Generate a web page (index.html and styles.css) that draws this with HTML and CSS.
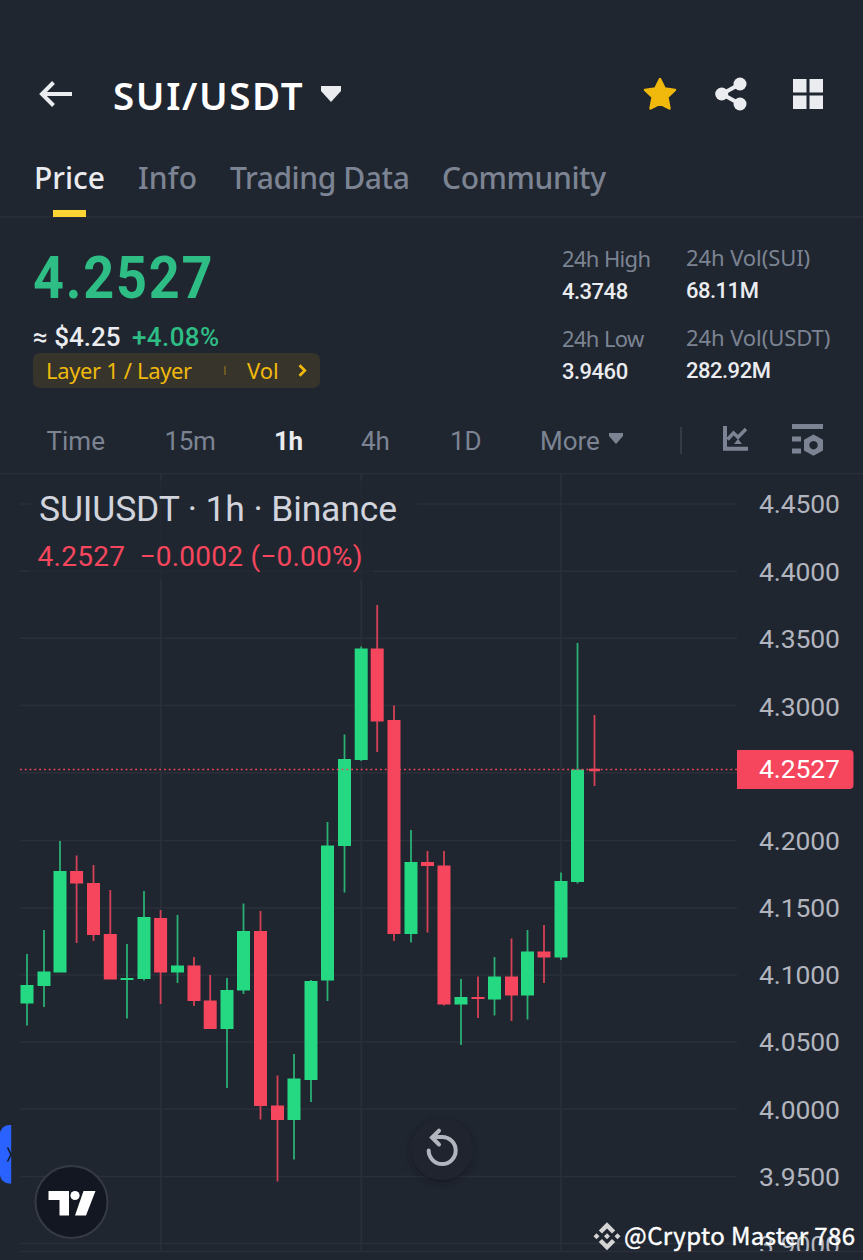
FILE: index.html
```html
<!DOCTYPE html>
<html lang="en">
<head>
<meta charset="utf-8">
<title>SUI/USDT</title>
<link rel="stylesheet" href="styles.css">
</head>
<body>
<header class="topbar">
  <svg class="back" width="34" height="28" viewBox="0 0 34 28"><path d="M14.500 2.500 3 14l11.500 11.500M3 14h30" fill="none" stroke="#eaecef" stroke-width="4"/></svg>
  <h1 class="pair">SUI/USDT</h1>
  <svg class="caret" width="22" height="17" viewBox="0 0 22 17"><path d="M1 0h20v5L11 16 1 5z" fill="#eaecef"/></svg>
  <svg class="star" width="34" height="34" viewBox="0 0 34 34"><path d="M17 2l4.700 9.600 10.300 1.300-7.600 7.300 2.100 11.300L17 26.600 7.500 31.500l2.100-11.300L2 12.900l10.300-1.300z" fill="#f0b90b" stroke="#f0b90b" stroke-width="2.500" stroke-linejoin="round"/></svg>
  <svg class="share" width="32" height="34" viewBox="0 0 32 34"><g fill="#eaecef"><circle cx="6.700" cy="17" r="6.500"/><circle cx="25" cy="7" r="6.500"/><circle cx="25" cy="27" r="6.500"/></g><path d="M25 7 7 17l18 10" fill="none" stroke="#eaecef" stroke-width="4"/></svg>
  <svg class="apps" width="30" height="30" viewBox="0 0 30 30"><path d="M0 0h13.500v13.500H0zM16.500 0H30v13.500H16.500zM0 16.500h13.500V30H0zM16.500 16.500H30V30H16.500z" fill="#eaecef"/></svg>
</header>
<nav class="tabs">
  <a class="tab tab-price active">Price</a>
  <a class="tab tab-info">Info</a>
  <a class="tab tab-trading">Trading Data</a>
  <a class="tab tab-community">Community</a>
</nav>
<section class="summary">
  <div class="quote">
    <div class="last">4.2527</div>
    <div class="approx"><span class="usd">≈ $4.25</span><span class="change">+4.08%</span></div>
    <div class="tags"><span class="tag-layer">Layer 1 / Layer</span><i class="tag-sep"></i><span class="tag-vol">Vol</span>
      <svg width="9" height="13" viewBox="0 0 9 13"><path d="M1.500 1.300 6.800 6.500 1.500 11.700" fill="none" stroke="#f0b90b" stroke-width="2.700"/></svg></div>
  </div>
  <dl class="stats stats-price">
    <dt class="s-high">24h High</dt><dd>4.3748</dd>
    <dt class="s-low">24h Low</dt><dd>3.9460</dd>
  </dl>
  <dl class="stats stats-vol">
    <dt class="s-sui">24h Vol(SUI)</dt><dd>68.11M</dd>
    <dt class="s-usdt">24h Vol(USDT)</dt><dd>282.92M</dd>
  </dl>
</section>
<nav class="periods">
  <a class="p-time">Time</a><a class="p-15">15m</a><a class="p-1h active">1h</a><a class="p-4h">4h</a><a class="p-1d">1D</a><a class="p-more">More</a>
  <svg class="more-caret" width="14" height="12" viewBox="0 0 14 12"><path d="M0 0h14v3L7 11 0 3z" fill="#7c8493"/></svg>
  <i class="divider"></i>
  <svg class="ind" width="25" height="26" viewBox="0 0 25 26"><path d="M2 0v22.700H25" fill="none" stroke="#7c8493" stroke-width="4"/><path d="M4.500 13.500 10.500 7 15 11.300 23 3" fill="none" stroke="#7c8493" stroke-width="3.400"/><path d="M11 18l4-5 4 5z" fill="#7c8493"/></svg>
  <svg class="settings" width="32" height="32" viewBox="0 0 32 32"><path d="M0 0h31v5H0zM0 12.500h9v5H0zM0 24.500h9v5H0z" fill="#7c8493"/><path fill-rule="evenodd" d="M21.500 10.500 31 15.800v10.700l-9.500 5.300-9.500-5.300v-10.700zM21.500 17a4.200 4.200 0 1 0 .01 0z" fill="#7c8493"/></svg>
</nav>
<main class="chart">
<svg class="plot" width="863" height="787" viewBox="0 473 863 787">
  <path class="grid" d="M0 473.500H863M20 504H737M20 571.200H737M20 638.300H737M20 705.500H737M20 773H737M20 840.500H737M20 908H737M20 975H737M20 1042H737M20 1109H737M20 1176.500H737M20 1243.500H737M20 1251.500H863M160.800 474V1251M361.200 474V1251M561 474V1251"/>
  <path class="mask" d="M29 481H418V536H29zM29 536H374V579H29z"/>
  <g class="up">
    <path class="wick" d="M27 954V1025.500M44 930V1007M60 841V972M127 944V1018.500M144 891V980.500M177.500 915V983M227 978V1088M243.500 903.500V994M294 1054V1159.500M311 980V1102M327.500 822V1001M344.500 734.500V892.500M361.200 646.500V761M411 830V942.500M461 979V1045M494.500 957V1015.500M527.500 930V1019.500M561 872.500V960M577.500 643V883.500"/>
    <path class="body" d="M27 985V1003.500M44 971.500V986M60 871V972.500M127 978V980M144 917V979M177.500 965.500V972.500M227 990V1029M243.500 931V990.500M294 1078.500V1120M311 981V1080M327.500 845.500V980.500M344.500 759V846M361.200 648.500V760M411 862V934M461 997V1004.500M494.500 976.500V999.500M527.500 951.500V995.500M561 881V957.500M577.500 769.500V882"/>
  </g>
  <g class="down">
    <path class="wick" d="M76.600 855.500V943M93.500 865V941M110.300 890V979M160.600 910V1004M194 957V1006M210.200 975V1029M260.500 911V1119.500M277.500 1075.500V1181.500M377.200 605V752M394 705.500V941M427.500 851V932.500M444 851V1005.500M478 976.500V1018M511.500 938.500V1021M544 925V983M594.500 715V786"/>
    <path class="body" d="M76.600 871V883.500M93.500 883V935M110.300 934V979.500M160.600 918V972.500M194 965.500V1001M210.200 1000.500V1029M260.500 931V1106M277.500 1105.500V1120M377.200 648.500V721.500M394 720V934M427.500 862V866M444 865.500V1004.500M478 997V999M511.500 976.500V995.500M544 951.500V957.500"/>
    <path d="M589 770H600" stroke-width="2.500"/>
  </g>
  <path class="price-line" d="M20 769.500H737"/>
  <g class="legend">
    <text x="39" y="521" class="symbol" textLength="358">SUIUSDT · 1h · Binance</text>
    <text x="37.500" y="566" class="delta" textLength="87.500">4.2527</text>
    <text x="139.500" y="566" class="delta" textLength="223">−0.0002 (−0.00%)</text>
  </g>
  <g class="axis">
    <text x="759" y="513" textLength="81">4.4500</text>
    <text x="759" y="581" textLength="81">4.4000</text>
    <text x="759" y="648" textLength="81">4.3500</text>
    <text x="759" y="715.600" textLength="81">4.3000</text>
    <text x="759" y="850" textLength="81">4.2000</text>
    <text x="759" y="917" textLength="81">4.1500</text>
    <text x="759" y="984" textLength="81">4.1000</text>
    <text x="759" y="1051" textLength="81">4.0500</text>
    <text x="759" y="1118.800" textLength="81">4.0000</text>
    <text x="759" y="1186" textLength="81">3.9500</text>
    <svg x="737" y="1230" width="126" height="21" viewBox="737 1230 126 21"><text x="759" y="1253.500" textLength="81">3.9000</text></svg>
    <path d="M737 750H849.500a4 4 0 0 1 4 4V785a4 4 0 0 1-4 4H737z" fill="#f6465d"/>
    <text x="759" y="778.400" textLength="81" class="current">4.2527</text>
  </g>
  <defs><filter id="soft" x="-30%" y="-30%" width="160%" height="160%"><feGaussianBlur stdDeviation="3"/></filter></defs>
  <circle cx="442" cy="1152" r="31" fill="#12161d" opacity=".65" filter="url(#soft)"/>
  <circle cx="442" cy="1149" r="31" fill="#1f242e"/>
  <path d="M428.700 1150.500a13.500 13.500 0 1 0 13.500-13.500h-9.500M439 1130.700 432 1137.500 439 1144.500" fill="none" stroke="#b2b5be" stroke-width="4" stroke-linecap="round"/>
  <path d="M11.200 1125H9a9 9 0 0 0-9 9V1174.500a9 9 0 0 0 9 9H11.200z" fill="#2962ff"/>
  <path d="M7.500 1147.500 11 1154.500 7.500 1161.500" fill="none" stroke="#161a25" stroke-width="1.600"/>
  <circle cx="71.500" cy="1202" r="36" fill="#131722" stroke="#363a45" stroke-width="2"/>
  <path d="M48.500 1191H69V1215.500H59.500V1200H48.500zM83.500 1191H95.500L86 1215.500H75z" fill="#fff"/><circle cx="75" cy="1195.500" r="4.600" fill="#fff"/>
  <g class="watermark">
    <path d="M607 1222.300 615.200 1230.500 612 1233.600 607 1228.600 602 1233.600 598.800 1230.500zM607 1250.200 615.200 1242 612 1238.900 607 1243.900 602 1238.900 598.800 1242zM596.500 1233.200 599.500 1236.200 596.500 1239.200 593.500 1236.200zM617.500 1233.200 620.500 1236.200 617.500 1239.200 614.500 1236.200zM607 1233.200 610 1236.200 607 1239.200 604 1236.200z" fill="#d4d4d4"/>
    <text x="624" y="1245" textLength="231">@Crypto Master 786</text>
  </g>
</svg>
</main>
</body>
</html>
```
FILE: styles.css
```css
* { box-sizing: border-box; }
body { margin: 0; width: 863px; height: 1260px; overflow: hidden; background: #202630; color: #eaecef; font-family: "Noto Sans", sans-serif; }
svg { display: block; flex: none; }
a, span, dt, dd, h1, .last { white-space: nowrap; }
.topbar { height: 146px; padding: 46px 39px 0; display: flex; align-items: center; }
.back { margin-right: 40px; margin-top: -5px; }
.pair { margin: 0; width: 192px; padding-bottom: 3px; font-size: 38.500px; line-height: 50px; font-weight: 600; color: #fff; letter-spacing: 1.600px; }
.caret { margin-left: 15px; margin-top: -4px; }
.star { margin-left: 301px; margin-top: -5px; }
.share { margin-left: 38px; margin-top: -5px; }
.apps { margin-left: 46px; margin-top: -5px; }
.tabs { height: 72px; display: flex; padding-left: 34px; border-bottom: 2px solid #272c36; }
.tab { font-size: 30px; line-height: 40px; height: 72px; padding-top: 12px; color: #7c8493; position: relative; font-weight: 500; letter-spacing: -0.400px; }
.tab-price { width: 104px; }
.tab-info { width: 92px; letter-spacing: 0.200px; }
.tab-trading { width: 212px; }
.tab.active { color: #eaecef; font-weight: 500; letter-spacing: 0; }
.tab.active::after { content: ""; position: absolute; left: 19px; bottom: 1px; width: 33px; height: 7px; background: #fcd535; }
.summary { height: 178px; display: flex; padding-left: 33px; }
.quote { width: 529px; padding-top: 27px; }
.last { font: 700 60px/66px Roboto, sans-serif; color: #2ebd85; letter-spacing: 2px; height: 75px; width: 210px; transform: scaleX(.9); transform-origin: 0 0; }
.approx { height: 33px; display: flex; font: 500 26px/34px Roboto, sans-serif; }
.usd { width: 99px; }
.change { color: #2ebd85; letter-spacing: 0.400px; }
.tags { width: 287px; height: 35px; padding-left: 13px; border-radius: 7px; background: #37342c; display: flex; align-items: center; color: #f0b90b; font-size: 22px; line-height: 35px; }
.tag-layer { width: 178px; letter-spacing: -0.350px; }
.tag-sep { width: 2px; height: 9px; background: #6b5921; }
.tag-vol { width: 51px; margin-left: 21px; }
.stats { margin: 0; width: 124px; padding-top: 23px; }
.stats-vol { padding-top: 22px; }
.stats dt { font-size: 22px; line-height: 34px; color: #7c8493; }
.stats .s-high, .stats .s-low { letter-spacing: -0.650px; }
.stats .s-sui, .stats .s-usdt { letter-spacing: -0.080px; }
.stats dd { margin: 0; font: 500 22px/34px Roboto, sans-serif; margin-bottom: 12px; letter-spacing: -0.500px; }
.periods { height: 77px; display: flex; padding: 25px 0 0 46.500px; font: 400 26px/40px Roboto, sans-serif; color: #7c8493; }
.p-time { width: 118px; }
.p-15 { width: 109.500px; letter-spacing: -0.400px; }
.p-1h { width: 87px; letter-spacing: -0.300px; }
.p-4h { width: 89px; }
.p-1d { width: 90px; }
.p-more { width: 68.500px; }
.periods .active { color: #eaecef; font-weight: 700; }
.more-caret { margin-top: 12px; }
.divider { width: 2px; height: 27px; margin: 6px 0 0 57px; background: #343a46; }
.ind { margin: 5px 0 0 41px; }
.settings { margin: 3px 0 0 44px; }
.grid { fill: none; stroke: #2a2f39; stroke-width: 1.600; }
.mask { fill: #202630; opacity: .7; }
.wick { fill: none; stroke-width: 1.800; }
.body { fill: none; stroke-width: 13; }
.up .body { stroke: #25d882; }
.up .wick { stroke: #2aae74; }
.down { stroke: #f6465d; }
.down .wick { stroke: #d44055; }
.price-line { stroke: #f6465d; stroke-width: 1.300; stroke-dasharray: 1.800 3; }
.legend, .axis { font-family: Roboto, sans-serif; }
.symbol { font-size: 35.500px; fill: #d1d4dc; }
.delta { font-size: 28px; fill: #f6465d; }
.axis text { font-size: 26.500px; fill: #b2b5be; }
.axis .current { fill: #fff; }
.watermark text { font: 400 24px "Noto Sans CJK SC", sans-serif; fill: #fff; stroke: #fff; stroke-width: .4px; }
```
